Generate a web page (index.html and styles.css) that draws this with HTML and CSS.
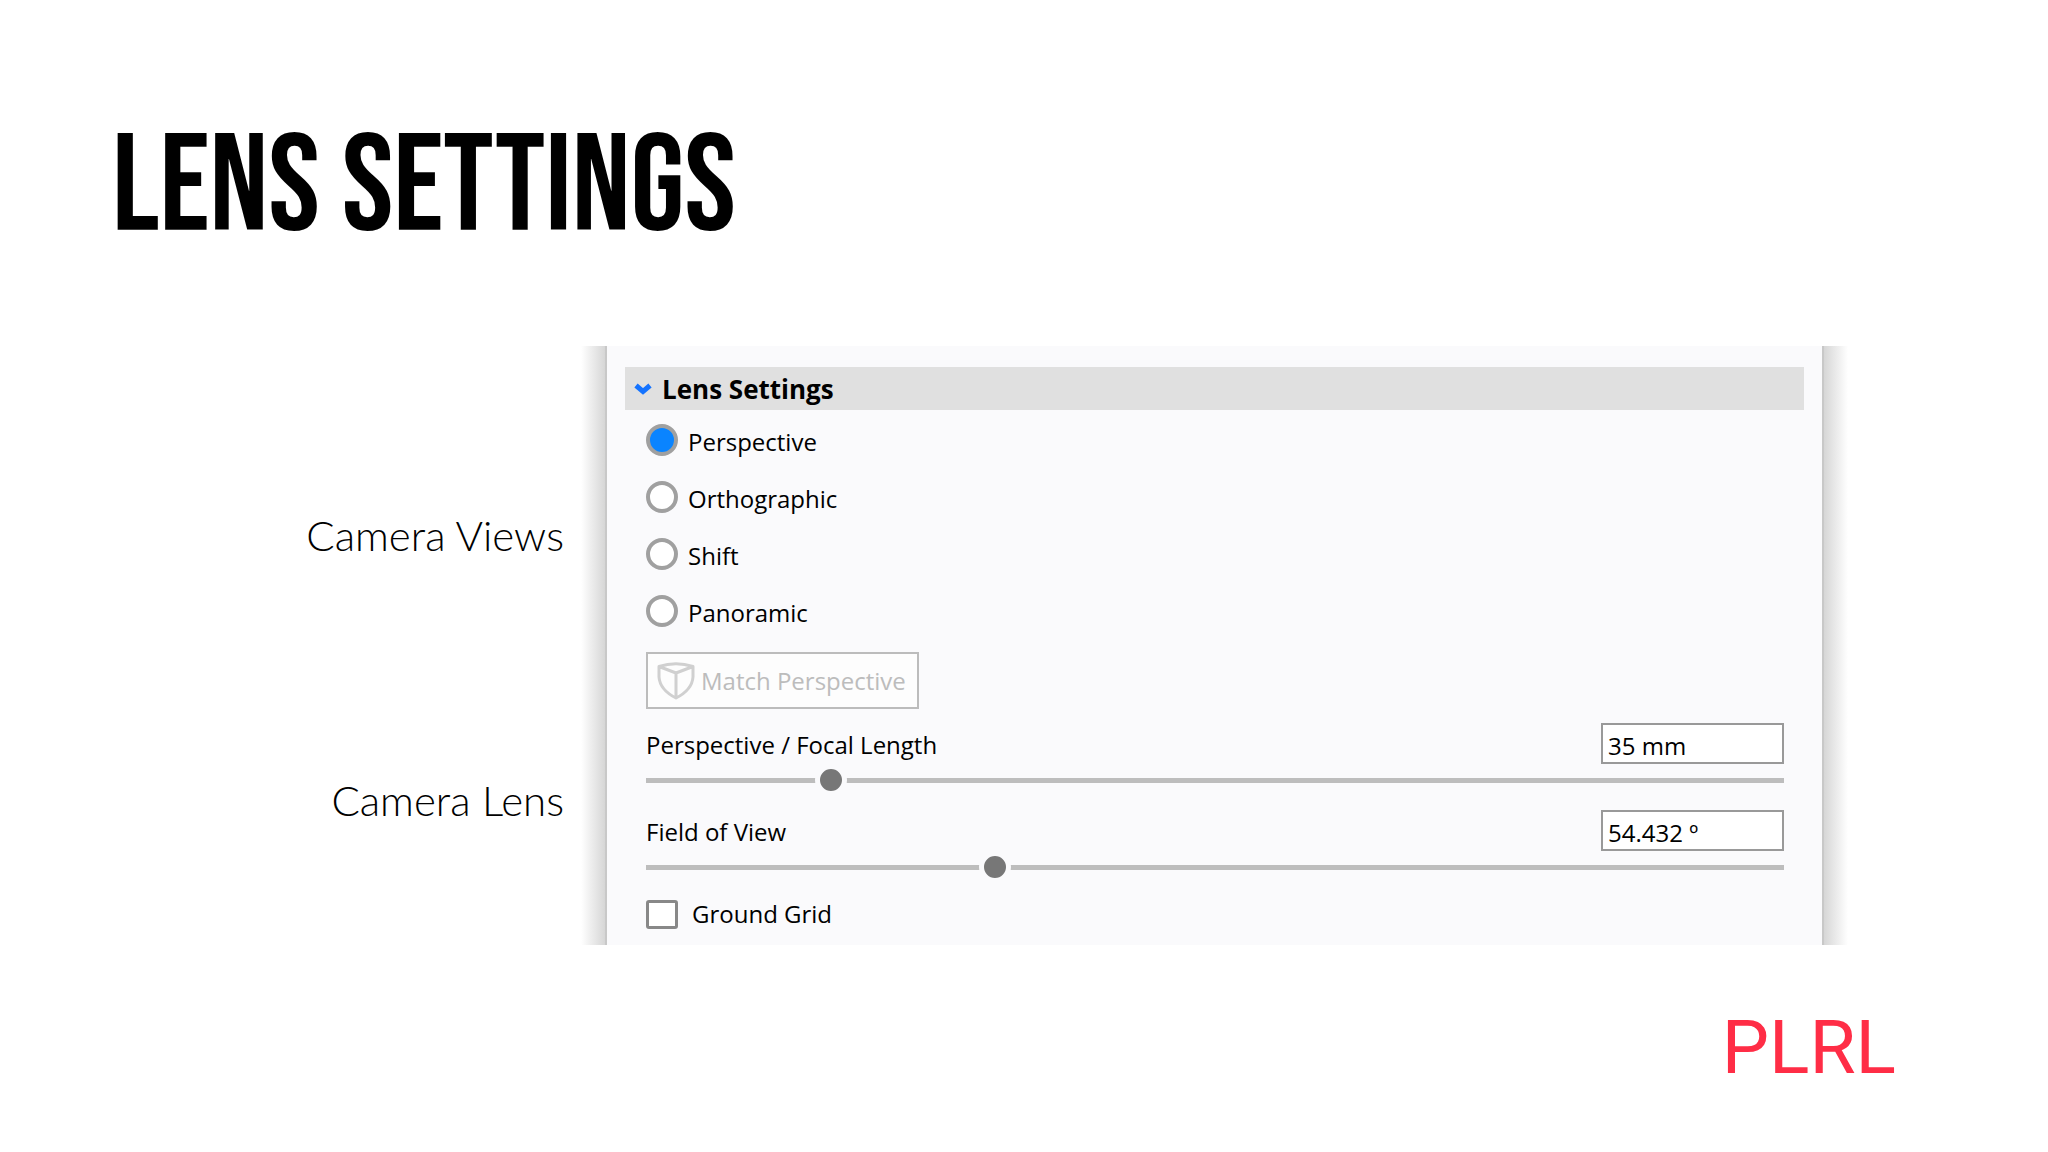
FILE: index.html
```html
<!DOCTYPE html>
<html lang="en">
<head>
    <meta charset="UTF-8">
    <meta name="viewport" content="width=device-width, initial-scale=1.0">
    <title>Lens Settings</title>
    <link rel="stylesheet" href="styles.css">
</head>
<body>

    <main class="slide">
        <h1>LENS SETTINGS</h1>

        <div class="content">
            <div class="captions">
                <p>Camera Views</p>
                <p>Camera Lens</p>
            </div>

            <div class="panel-wrap">
                <form class="panel">
                    <h2 class="panel-header">
                        <svg class="chevron" viewBox="0 0 18 12" aria-hidden="true"><path d="M2 2.5L9 8.5L16 2.5"/></svg>
                        Lens Settings
                    </h2>

                    <div class="panel-body">
                        <div class="views">
                            <label class="option"><input type="radio" name="view" value="perspective" checked><span>Perspective</span></label>
                            <label class="option"><input type="radio" name="view" value="orthographic"><span>Orthographic</span></label>
                            <label class="option"><input type="radio" name="view" value="shift"><span>Shift</span></label>
                            <label class="option"><input type="radio" name="view" value="panoramic"><span>Panoramic</span></label>
                        </div>

                        <button type="button" class="match" disabled>
                            <svg class="cube" viewBox="0 0 38 38" aria-hidden="true">
                                <path d="M2 4.500Q19 -1 36 4.500V15Q35 28 19 36Q3 28 2 15ZM2 4.500L19 11L36 4.500M19 11V36"/>
                            </svg>
                            Match Perspective
                        </button>

                        <div class="setting">
                            <div class="setting-row">
                                <label for="focal">Perspective / Focal Length</label>
                                <input type="text" id="focal" class="value" value="35 mm">
                            </div>
                            <input type="range" class="slider" min="0" max="1000" value="153" aria-label="Focal length">
                        </div>

                        <div class="setting">
                            <div class="setting-row">
                                <label for="fov">Field of View</label>
                                <input type="text" id="fov" class="value" value="54.432 º">
                            </div>
                            <input type="range" class="slider" min="0" max="1000" value="301" aria-label="Field of view">
                        </div>

                        <label class="grid-option"><input type="checkbox" name="grid">Ground Grid</label>
                    </div>
                </form>
            </div>
        </div>

        <div class="logo">PLRL</div>
    </main>

</body>
</html>
```

FILE: styles.css
```css
* { box-sizing: border-box; }
body { margin: 0; background: #fff; color: #000; font-family: "Open Sans", "Noto Sans", sans-serif; }
h1, h2, p { margin: 0; }

.slide { min-height: 100vh; padding-top: 116px; }
h1 { height: 130px; padding-left: 112px; font-family: "Bebas Neue", sans-serif; font-size: 138px; font-weight: 400; line-height: 146px; white-space: nowrap; }

.content { display: grid; grid-template-columns: 581fr 1267fr 200fr; margin-top: 100px; }
.captions { display: flex; flex-direction: column; gap: 215px; padding: 164px 17px 0 0; text-align: right; font-family: Lato, sans-serif; font-size: 42px; font-weight: 300; line-height: 50px; }

/* soft shadow on the left and right sides only */
.panel-wrap { padding: 0 24px; background: linear-gradient(to left, #d6d6d6, #fff) left / 24px 100% no-repeat, linear-gradient(to right, #d6d6d6, #fff) right / 24px 100% no-repeat; }
.panel { padding: 21px 18px 15px; background: #fafafc; border: solid #c8c8c8; border-width: 0 2px; }
.panel-header { display: flex; align-items: center; gap: 10px; height: 43px; padding-left: 9px; background: #e0e0e0; font-size: 26px; font-weight: 700; }
.chevron { width: 18px; height: 12px; fill: none; stroke: #1473ff; stroke-width: 5; }

.panel-body { padding: 14px 20px 0 21px; font-size: 24px; line-height: 32px; }
.views { display: flex; flex-direction: column; gap: 25px; }
.option, .grid-option { display: flex; align-items: center; gap: 10px; }
.option span, .setting-row label { padding-top: 3px; }
.option span { margin-bottom: -1px; }
.option input, .grid-option input { appearance: none; flex: none; width: 32px; height: 32px; margin: 0; background: #fff; border: 4px solid #a0a0a0; }
.option { height: 32px; }
.option input { border-radius: 50%; }
.option input:checked { background: #0a84ff; }
.grid-option { gap: 14px; margin-top: 15px; }
.grid-option input { height: 29px; border: 3px solid #888; border-radius: 3px; }

.match { display: flex; align-items: center; gap: 6px; height: 57px; margin-top: 25px; padding: 0 11px 0 9px; background: #fdfdfd; border: 2px solid #bcbcbc; color: #bcbcbc; font: inherit; }
.cube { width: 38px; height: 38px; fill: none; stroke: #d0d0d0; stroke-width: 3; stroke-linejoin: round; }

.setting { margin-top: 14px; }
.setting-row { display: flex; align-items: center; justify-content: space-between; }
.value { width: 183px; height: 41px; padding: 4px 5px 0; background: #fff; border: 2px solid #999; color: #000; font: inherit; }

.slider { appearance: none; display: block; width: 100%; height: 32px; margin: 0; background: none; }
.slider::-webkit-slider-runnable-track { height: 5px; background: #bdbdbd; }
.slider::-webkit-slider-thumb { appearance: none; width: 32px; height: 32px; margin-top: -14px; background: #777; border: 5px solid #fafafc; border-radius: 50%; }

.logo { margin: 62px 152px 0 0; color: #ff2d46; font-family: Roboto, sans-serif; font-size: 75px; line-height: 80px; text-align: right; }
```
